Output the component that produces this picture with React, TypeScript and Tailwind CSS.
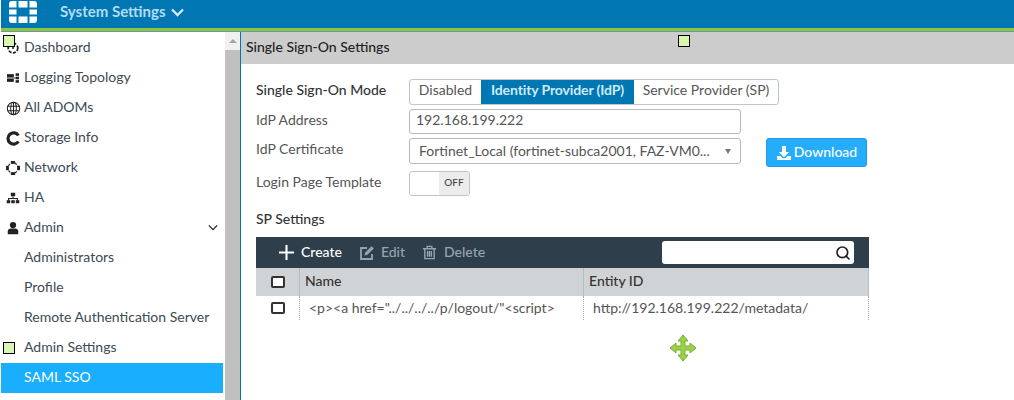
import { Search } from "lucide-react";
import type { ReactNode } from "react";

const Handle = ({ className }: { className: string }) => (
  <div className={`absolute w-[12px] h-[12px] bg-[#d9f7b0] border border-black ${className}`} />
);

const Gear = () => (
  <svg viewBox="0 0 16 16" className="w-[14px] h-[14px] text-[#222]" fill="none" stroke="currentColor">
    <circle cx="8" cy="8" r="5.5" strokeWidth="2" strokeDasharray="3.5 1.6" />
    <circle cx="8" cy="8" r="1.2" fill="currentColor" stroke="none" />
  </svg>
);
const Topology = () => (
  <svg viewBox="0 0 14 11" className="w-[12px] h-[10px] text-[#222]" fill="currentColor">
    <rect x="0" y="1" width="8" height="4" />
    <rect x="0" y="6" width="8" height="4" />
    <rect x="10" y="0" width="4" height="3" />
    <rect x="10" y="4" width="4" height="3" />
    <rect x="10" y="8" width="4" height="3" />
    <rect x="8" y="5" width="2" height="1" />
  </svg>
);
const Globe = () => (
  <svg viewBox="0 0 16 16" className="w-[15px] h-[15px] text-[#222]" fill="none" stroke="currentColor" strokeWidth="1.1">
    <circle cx="8" cy="8" r="6.6" />
    <ellipse cx="8" cy="8" rx="3" ry="6.6" />
    <path d="M1.6 5.6h12.8M1.6 10.4h12.8M8 1.4v13.2" />
  </svg>
);
const Storage = () => (
  <svg viewBox="0 0 16 16" className="w-[15px] h-[15px] text-[#222]" fill="none" stroke="currentColor" strokeWidth="3.400">
    <path d="M13.2 4.800A6 6 0 1 0 13.200 11.200" />
  </svg>
);
const Net = () => (
  <svg viewBox="0 0 16 16" className="w-[14px] h-[14px] text-[#222]" fill="none" stroke="currentColor" strokeWidth="1.4">
    <circle cx="8" cy="8" r="5.800" strokeDasharray="2.500 1.600" />
    <rect x="5.500" y="0" width="5" height="3.200" fill="currentColor" stroke="none" />
    <rect x="5.500" y="12.800" width="5" height="3.200" fill="currentColor" stroke="none" />
    <rect x="0" y="5.500" width="3.200" height="5" fill="currentColor" stroke="none" />
    <rect x="12.800" y="5.500" width="3.200" height="5" fill="currentColor" stroke="none" />
  </svg>
);
const Ha = () => (
  <svg viewBox="0 0 16 16" className="w-[14px] h-[14px] text-[#222]" fill="currentColor">
    <rect x="5.5" y="2" width="5" height="4" />
    <rect x="7.4" y="6" width="1.2" height="3" />
    <rect x="2.5" y="8" width="11" height="1.2" />
    <rect x="0.8" y="10.5" width="4" height="3.5" />
    <rect x="6" y="10.5" width="4" height="3.5" />
    <rect x="11.2" y="10.5" width="4" height="3.5" />
    <rect x="2.4" y="8" width="1.2" height="3" />
    <rect x="12.4" y="8" width="1.2" height="3" />
  </svg>
);
const User = () => (
  <svg viewBox="0 0 16 16" className="w-[14px] h-[14px] text-[#222]" fill="currentColor">
    <circle cx="8" cy="4.6" r="3.6" />
    <path d="M2 15v-3.2C2 9.6 4 8.6 5.4 8.6h5.2c1.4 0 3.4 1 3.4 3.2V15z" />
  </svg>
);

const SmallChevron = () => (
  <svg viewBox="0 0 12 8" className="ml-auto mr-[5px] -mt-[2px] w-[10px] h-[7px] text-[#222]" fill="none" stroke="currentColor" strokeWidth="1.500">
    <path d="M1 1.500l5 5 5-5" />
  </svg>
);

const Row = ({ icon, children, chevron, active }: { icon?: ReactNode; children: ReactNode; chevron?: boolean; active?: boolean }) => (
  <div className={`h-[30px] flex items-center text-[14px] ${active ? "bg-[#1aaeff] text-white" : "text-[#3c4a54]"}`}>
    <span className="w-[23px] pl-px flex items-center justify-center shrink-0">{icon}</span>
    <span className="pb-[4px]">{children}</span>
    {chevron && <SmallChevron />}
  </div>
);

const Logo = () => (
  <svg viewBox="0 0 28 22" className="w-[28px] h-[22px] fill-white">
    <path d="M7.500 0H3Q0 0 0 3V6.500h7.500zM9.500 0h9v6.500h-9zM20.500 0H25Q28 0 28 3V6.500h-7.500zM0 8.500h7.500v5H0zM20.500 8.500H28v5h-7.500zM0 15.500h7.500V22H3Q0 22 0 19zM9.500 15.500h9V22h-9zM20.500 15.500H28V19Q28 22 25 22h-4.500z" />
  </svg>
);

const Label = ({ children, className }: { children: ReactNode; className: string }) => (
  <div className={`w-[153px] shrink-0 text-[14px] ${className}`}>{children}</div>
);

const EditIcon = () => (
  <svg viewBox="0 0 16 16" className="w-[16px] h-[16px]" fill="none" stroke="currentColor" strokeWidth="1.8">
    <path d="M13 9v5H2V3h6" />
    <path d="M5.500 10.500l.7-3L12.500 1.200l2.300 2.300-6.300 6.300z" fill="currentColor" stroke="none" />
  </svg>
);
const TrashIcon = () => (
  <svg viewBox="0 0 16 16" className="w-[15px] h-[15px]" fill="none" stroke="currentColor" strokeWidth="1.5">
    <path d="M1 4h14M5.500 4V1.500h5V4M3 4v10.500h10V4M6 6.500v6M8 6.500v6M10 6.500v6" />
  </svg>
);
const DownloadIcon = () => (
  <svg viewBox="0 0 16 16" className="w-[16px] h-[16px] fill-white">
    <path d="M6 1h4v6h3.200L8 12.200 2.800 7H6z" />
    <path d="M1 11h3.500l2.200 2.200h2.600l2.200-2.200H15v4H1z" />
  </svg>
);
const Check = () => <span className="block w-[14px] h-[12px] rounded-[2px] border-2 border-[#333] bg-white" />;

const Move = () => (
  <svg viewBox="0 0 28 28" className="w-[28px] h-[28px]">
    <path d="M14 1l5 6h-3v5h5V9l6 5-6 5v-3h-5v5h3l-5 6-5-6h3v-5H7v3l-6-5 6-5v3h5V7H9z" fill="#9ad14b" stroke="#78b032" strokeWidth="1" />
  </svg>
);

export default function App() {
  return (
    <div className="relative w-[1014px] h-[400px] overflow-hidden bg-white font-['Lato','Open_Sans',sans-serif]">
      <header className="h-[28px] ml-px bg-[#0077b3] flex items-center pl-[8px] pb-[5px]">
        <Logo />
        <span className="ml-[23px] text-[#b3dcf2] text-[15px] font-bold">System Settings</span>
        <svg viewBox="0 0 13 9" className="ml-[5px] mt-[2px] w-[13px] h-[9px] text-[#cfe8f5]" fill="none" stroke="currentColor" strokeWidth="2.400">
          <path d="M1 1.500l5.500 5.500 5.500-5.500" />
        </svg>
      </header>
      <div className="h-[3px] ml-px bg-[#8dc63f]" />
      <div className="h-px ml-px bg-[#6d98a8]" />
      <div className="flex h-[368px]">
        <aside className="w-[240px] shrink-0 flex pl-px">
          <nav className="w-[222px] pt-px">
            <Row icon={<Gear />}>Dashboard</Row>
            <Row icon={<Topology />}>Logging Topology</Row>
            <Row icon={<Globe />}>All ADOMs</Row>
            <Row icon={<Storage />}>Storage Info</Row>
            <Row icon={<Net />}>Network</Row>
            <Row icon={<Ha />}>HA</Row>
            <Row icon={<User />} chevron>Admin</Row>
            <Row>Administrators</Row>
            <Row>Profile</Row>
            <Row>Remote Authentication Server</Row>
            <Row>Admin Settings</Row>
            <Row active>SAML SSO</Row>
          </nav>
          <div className="ml-[2px] w-[15px] flex flex-col bg-[#f0f0f0]">
            <div className="h-[18px] flex items-center justify-center">
              <span className="w-0 h-0 border-x-[4px] border-x-transparent border-b-[4px] border-b-[#a3a3a3]" />
            </div>
            <div className="flex-1 bg-[#c0c0c0]" />
          </div>
        </aside>
        <main className="flex-1 border-l-[1px] border-[#0077b3]">
          <div className="h-[32px] bg-[#cccccc] flex items-center pl-[5px] pb-[4px] text-[14px] text-[#222] font-medium">Single Sign-On Settings</div>
          <div className="pl-[15px] pt-[15px]">
            <div className="flex items-center h-[26px]">
              <Label className="text-[#333] font-medium pb-[6px]">Single Sign-On Mode</Label>
              <div className="flex h-[26px] text-[14px] border border-[#c4c4c4] rounded-[3px] overflow-hidden">
                <div className="w-[71px] pb-[6px] flex items-center justify-center text-[#555]">Disabled</div>
                <div className="w-[153px] pb-[6px] flex items-center justify-center bg-[#0077b3] text-[#cdeaf8] font-bold tracking-[-0.12px]">Identity Provider (IdP)</div>
                <div className="w-[144px] pb-[6px] flex items-center justify-center text-[#555]">Service Provider (SP)</div>
              </div>
            </div>
            <div className="flex items-center h-[25px] mt-[4px]">
              <Label className="text-[#555] pb-[4px]">IdP Address</Label>
              <div className="w-[332px] h-[25px] border border-[#b8b8b8] rounded-[3px] pl-[6px] pb-[4px] flex items-center text-[14px] text-[#555]">192.168.199.222</div>
            </div>
            <div className="flex items-center h-[26px] mt-[4px]">
              <Label className="text-[#555] pb-[6px]">IdP Certificate</Label>
              <div className="w-[332px] h-[26px] border border-[#b8b8b8] rounded-[3px] pl-[9px] pr-[9px] flex items-center text-[14px] text-[#555]">
                <span className="pb-[2px]">Fortinet_Local (fortinet-subca2001, FAZ-VM0...</span>
                <span className="ml-auto w-0 h-0 border-x-[3px] border-x-transparent border-t-[5px] border-t-[#777]" />
              </div>
              <div className="ml-[25px] w-[101px] h-[29px] mt-[3px] bg-[#25adfb] border border-[#1c9fe8] rounded-[3px] flex items-center justify-center gap-[2px] text-white text-[14px] font-medium">
                <DownloadIcon />
                <span className="pb-[2px]">Download</span>
              </div>
            </div>
            <div className="flex items-center h-[25px] mt-[7px]">
              <Label className="text-[#555] pb-[4px]">Login Page Template</Label>
              <div className="w-[61px] h-[25px] border border-[#c4c4c4] rounded-[3px] flex overflow-hidden">
                <div className="w-[29px]" />
                <div className="flex-1 pb-[2px] bg-[#ececec] flex items-center justify-center text-[10px] font-medium text-[#444]">OFF</div>
              </div>
            </div>
            <div className="mt-[14px] h-[18px] pb-[2px] flex items-center text-[14px] font-medium text-[#333]">SP Settings</div>
            <div className="mt-[9px] w-[613px]">
              <div className="h-[31px] bg-[#2f3e4b] flex items-center text-[14px] font-medium">
                <svg viewBox="0 0 16 16" className="ml-[23px] w-[15px] h-[15px] text-white" stroke="currentColor" strokeWidth="2.200"><path d="M8 0v16M0 8h16" /></svg>
                <span className="ml-[7px] pb-[2px] text-white">Create</span>
                <span className="ml-[17px] text-[#98a4ad]"><EditIcon /></span>
                <span className="ml-[6px] pb-[2px] text-[#98a4ad]">Edit</span>
                <span className="ml-[17px] text-[#98a4ad]"><TrashIcon /></span>
                <span className="ml-[7px] pb-[2px] text-[#98a4ad]">Delete</span>
                <div className="ml-auto mr-[15px] w-[192px] h-[23px] bg-white rounded-[3px] flex items-center justify-end pr-[3px]">
                  <Search className="w-[16px] h-[16px] text-[#222]" strokeWidth={2.500} />
                </div>
              </div>
              <div className="h-[28px] bg-[#d0d3d6] flex items-center text-[14px] text-[#333] font-medium">
                <div className="w-[44px] h-full flex items-center justify-center border-r border-[#bbb]"><Check /></div>
                <div className="w-[284px] h-full flex items-center pl-[5px] pb-[4px] border-r border-[#bbb]">Name</div>
                <div className="flex-1 h-full flex items-center pl-[5px] pb-[4px] border-r border-[#bbb]">Entity ID</div>
              </div>
              <div className="h-[24px] flex items-center text-[14px] text-[#555]">
                <div className="w-[44px] h-full flex items-center justify-center border-r border-dotted border-[#aaa]"><Check /></div>
                <div className="w-[284px] h-full flex items-center pl-[9px] pb-[2px] border-r border-dotted border-[#aaa]">{'<p><a href="../../../../p/logout/"<script>'}</div>
                <div className="flex-1 h-full flex items-center pl-[9px] pb-[2px] border-r border-dotted border-[#aaa]">http://192.168.199.222/metadata/</div>
              </div>
            </div>
          </div>
        </main>
      </div>
      <Handle className="left-[3px] top-[35px]" />
      <Handle className="left-[3px] top-[342px]" />
      <Handle className="left-[678px] top-[35px]" />
      <div className="absolute left-[669px] top-[334px]"><Move /></div>
    </div>
  );
}
